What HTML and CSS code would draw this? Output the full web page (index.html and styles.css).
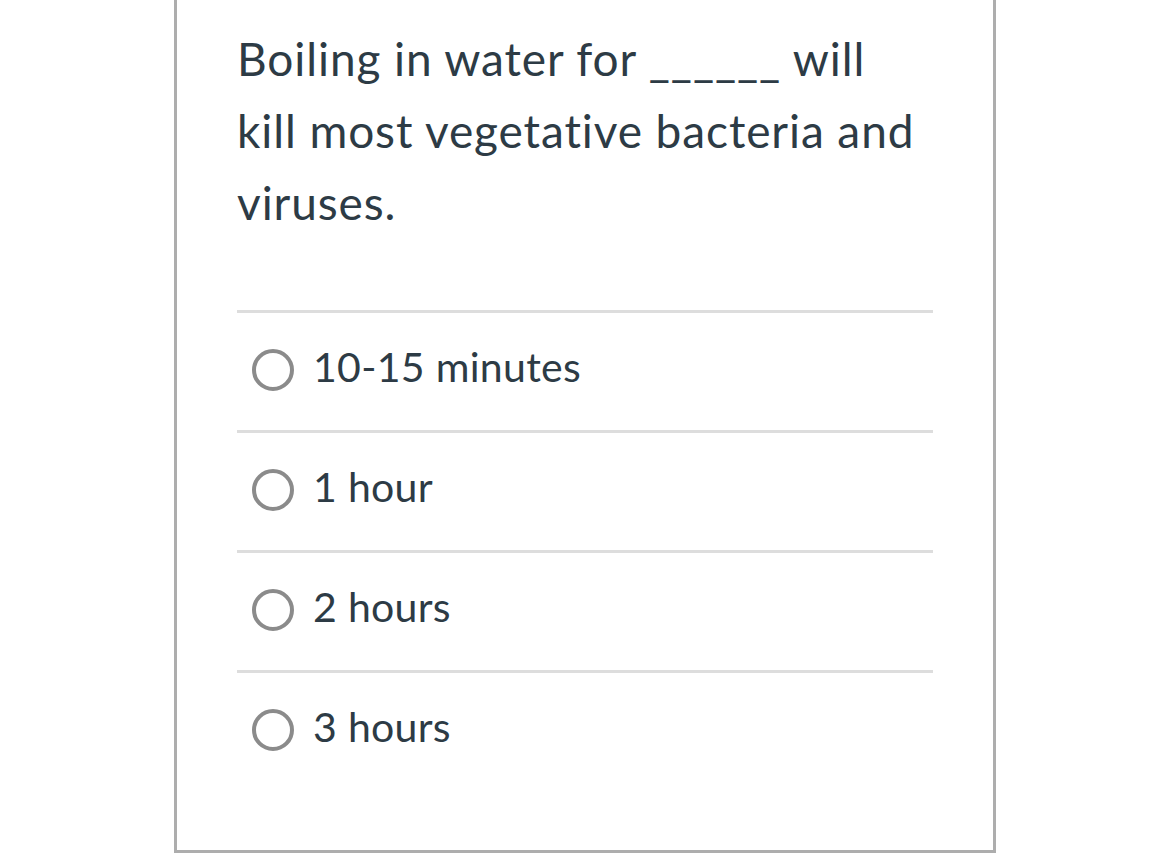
FILE: index.html
```html
<!DOCTYPE html>
<html>
<head>
<meta charset="utf-8">
<link rel="stylesheet" href="styles.css">
</head>
<body>
<div class="quiz">
  <p class="question">Boiling in water for ______ will kill most vegetative bacteria and viruses.</p>
  <ul class="answers">
    <li class="answer"><span class="radio"></span><span class="label">10-15 minutes</span></li>
    <li class="answer"><span class="radio"></span><span class="label">1 hour</span></li>
    <li class="answer"><span class="radio"></span><span class="label">2 hours</span></li>
    <li class="answer"><span class="radio"></span><span class="label">3 hours</span></li>
  </ul>
</div>
</body>
</html>
```
FILE: styles.css
```css
html, body {
  margin: 0;
  padding: 0;
  background: #ffffff;
}
body {
  font-family: Lato, "Liberation Sans", sans-serif;
  color: #2d3b45;
}
.quiz {
  box-sizing: border-box;
  margin-left: 174px;
  width: 822px;
  height: 853px;
  border-left: 3px solid #adadad;
  border-right: 3px solid #adadad;
  border-bottom: 3px solid #adadad;
  padding: 23px 60px 0 60px;
}
.question {
  margin: 0;
  font-size: 46px;
  letter-spacing: 0.9px;
  line-height: 72px;
}
.answers {
  list-style: none;
  margin: 71px 0 0 0;
  padding: 0;
}
.answer {
  box-sizing: border-box;
  display: flex;
  align-items: center;
  height: 120px;
  border-top: 3px solid #dddddd;
  padding: 0 0 4px 15px;
  gap: 19px;
}
.radio {
  box-sizing: border-box;
  width: 42px;
  height: 42px;
  border: 4px solid #8b8b8b;
  border-radius: 50%;
  flex: none;
}
.label {
  font-size: 41px;
  letter-spacing: 0.3px;
  line-height: 48px;
  margin-bottom: 5px;
}
```
